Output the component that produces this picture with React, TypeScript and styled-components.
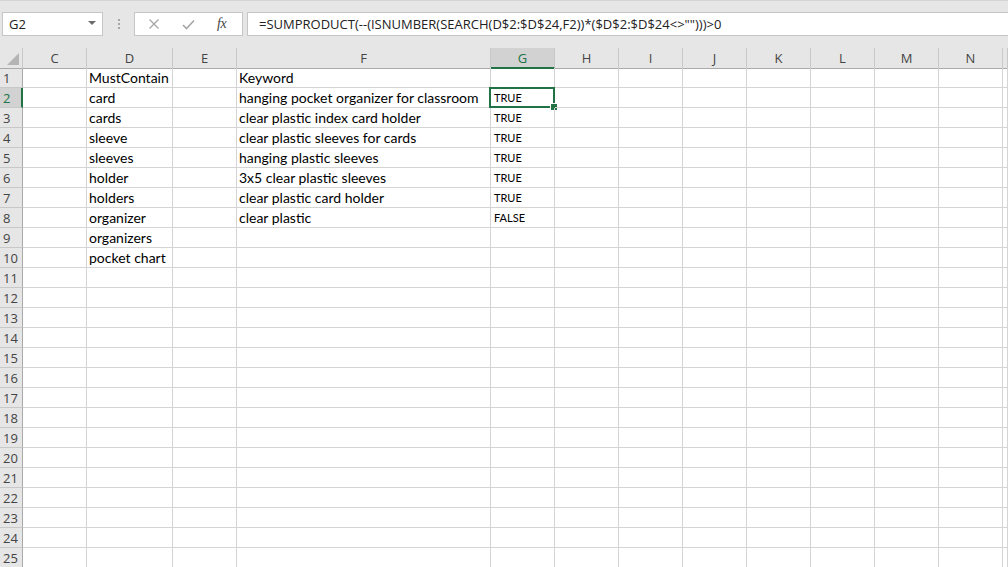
import React from "react";
import styled, { createGlobalStyle } from "styled-components";

const GlobalStyle = createGlobalStyle`
  html, body {
    margin: 0;
    padding: 0;
    background: #ffffff;
    overflow: hidden;
  }
`;

const columns = [
  { name: "C", width: 64 },
  { name: "D", width: 86 },
  { name: "E", width: 64 },
  { name: "F", width: 254 },
  { name: "G", width: 64 },
  { name: "H", width: 64 },
  { name: "I", width: 64 },
  { name: "J", width: 64 },
  { name: "K", width: 64 },
  { name: "L", width: 64 },
  { name: "M", width: 64 },
  { name: "N", width: 64 },
];

const mustContain = [
  "MustContain",
  "card",
  "cards",
  "sleeve",
  "sleeves",
  "holder",
  "holders",
  "organizer",
  "organizers",
  "pocket chart",
];

const keywords = [
  "Keyword",
  "hanging pocket organizer for classroom",
  "clear plastic index card holder",
  "clear plastic sleeves for cards",
  "hanging plastic sleeves",
  "3x5 clear plastic sleeves",
  "clear plastic card holder",
  "clear plastic",
];

const results = ["", "TRUE", "TRUE", "TRUE", "TRUE", "TRUE", "TRUE", "FALSE"];

// last track is the partly visible next column
const template = `23px ${columns.map((c) => c.width + "px").join(" ")} 1fr`;

const Page = styled.div`
  width: 1008px;
  height: 567px;
  overflow: hidden;
  background: #ffffff;
  font-family: "Open Sans", "Liberation Sans", sans-serif;
`;

const FormulaArea = styled.div`
  height: 48px;
  box-sizing: border-box;
  background: #e6e6e6;
  border-top: 1px solid #d4d4d4;
  display: flex;
  align-items: flex-start;
  padding: 11px 0 0 2px;
`;

const NameBox = styled.div`
  width: 101px;
  height: 24px;
  box-sizing: border-box;
  background: #ffffff;
  border: 1px solid #c6c6c6;
  display: flex;
  align-items: center;
  justify-content: space-between;
  padding: 0 6px 0 6px;
  font-size: 13px;
  color: #222;
`;

const Arrow = styled.span`
  width: 0;
  height: 0;
  border-left: 4px solid transparent;
  border-right: 4px solid transparent;
  border-top: 4px solid #6d6d6d;
  margin-top: -3px;
`;

const Grip = styled.div`
  width: 31px;
  height: 24px;
  display: flex;
  flex-direction: column;
  align-items: center;
  justify-content: center;
  gap: 2px;
  span {
    width: 2px;
    height: 2px;
    background: #a6a6a6;
  }
`;

const ButtonBox = styled.div`
  width: 109px;
  height: 24px;
  box-sizing: border-box;
  background: #ffffff;
  border: 1px solid #c6c6c6;
  display: flex;
  align-items: center;
  padding-left: 13px;
`;

const IconCell = styled.div<{ $w: number }>`
  width: ${(p) => p.$w}px;
  display: flex;
  align-items: center;
  justify-content: flex-start;
`;

const Fx = styled.span`
  font-family: "Liberation Serif", serif;
  font-style: italic;
  font-size: 14px;
  color: #444;
  letter-spacing: -0.5px;
`;

const FormulaInput = styled.div`
  flex: 1;
  margin-left: 4px;
  height: 24px;
  box-sizing: border-box;
  background: #ffffff;
  border: 1px solid #c6c6c6;
  border-right: none;
  display: flex;
  align-items: center;
  padding-left: 11px;
  font-size: 13px;
  color: #222;
  white-space: nowrap;
`;

const Grid = styled.div`
  display: flex;
  flex-direction: column;
`;

const Row = styled.div`
  display: grid;
  grid-template-columns: ${template};
  height: 20px;
`;

const Corner = styled.div`
  position: relative;
  background: #e6e6e6;
  border-right: 1px solid #c8c8c8;
  border-bottom: 1px solid #aaaaaa;
  box-sizing: border-box;
  &::after {
    content: "";
    position: absolute;
    right: 3px;
    bottom: 3px;
    width: 0;
    height: 0;
    border-left: 12px solid transparent;
    border-bottom: 12px solid #b4b4b4;
  }
`;

const ColHeader = styled.div<{ $active?: boolean }>`
  box-sizing: border-box;
  background: ${(p) => (p.$active ? "#d2d2d2" : "#e6e6e6")};
  border-right: 1px solid #c8c8c8;
  border-bottom: ${(p) => (p.$active ? "2px solid #217346" : "1px solid #aaaaaa")};
  color: ${(p) => (p.$active ? "#217346" : "#444444")};
  font-size: 13px;
  display: flex;
  align-items: center;
  justify-content: center;
  padding-top: ${(p) => (p.$active ? "1px" : "0")};
`;

const RowHeader = styled.div<{ $active?: boolean }>`
  box-sizing: border-box;
  background: ${(p) => (p.$active ? "#d2d2d2" : "#e6e6e6")};
  border-right: ${(p) => (p.$active ? "2px solid #217346" : "1px solid #aaaaaa")};
  border-bottom: 1px solid #c8c8c8;
  color: ${(p) => (p.$active ? "#217346" : "#444444")};
  font-size: 13px;
  display: flex;
  align-items: center;
  padding-left: 3px;
`;

const Cell = styled.div<{ $small?: boolean; $selected?: boolean }>`
  position: relative;
  box-sizing: border-box;
  border-right: 1px solid #d4d4d4;
  border-bottom: 1px solid #d4d4d4;
  font-family: "Lato", "Liberation Sans", sans-serif;
  font-size: ${(p) => (p.$small ? "11px" : "14px")};
  color: #000;
  display: flex;
  align-items: ${(p) => (p.$small ? "center" : "flex-end")};
  padding: ${(p) => (p.$small ? "0 0 1px 3px" : "0 0 1px 2px")};
  white-space: nowrap;
  overflow: visible;
  ${(p) =>
    p.$selected &&
    `
    &::before {
      content: "";
      position: absolute;
      left: -2px;
      top: -1px;
      right: -1px;
      bottom: -1px;
      border: 2px solid #217346;
      pointer-events: none;
    }
    &::after {
      content: "";
      position: absolute;
      right: -4px;
      bottom: -4px;
      width: 6px;
      height: 6px;
      background: #217346;
      border: 1px solid #ffffff;
    }
  `}
`;

const CrossIcon = () => (
  <svg width="12" height="12" viewBox="0 0 12 12">
    <path d="M1.5 1.5 L10.5 10.5 M10.5 1.5 L1.5 10.5" stroke="#a6a6a6" strokeWidth="1.3" fill="none" />
  </svg>
);

const CheckIcon = () => (
  <svg width="13" height="11" viewBox="0 0 13 11">
    <path d="M1 6 L4.5 9.5 L12 1.5" stroke="#a6a6a6" strokeWidth="1.6" fill="none" />
  </svg>
);

export default function App() {
  const rows = Array.from({ length: 25 }, (_, i) => i + 1);
  return (
    <Page>
      <GlobalStyle />
      <FormulaArea>
        <NameBox>
          G2
          <Arrow />
        </NameBox>
        <Grip>
          <span />
          <span />
          <span />
        </Grip>
        <ButtonBox>
          <IconCell $w={34}>
            <CrossIcon />
          </IconCell>
          <IconCell $w={35}>
            <CheckIcon />
          </IconCell>
          <IconCell $w={20}>
            <Fx>fx</Fx>
          </IconCell>
        </ButtonBox>
        <FormulaInput>=SUMPRODUCT(--(ISNUMBER(SEARCH(D$2:$D$24,F2))*($D$2:$D$24&lt;&gt;"")))&gt;0</FormulaInput>
      </FormulaArea>
      <Grid>
        <Row>
          <Corner />
          {columns.map((c) => (
            <ColHeader key={c.name} $active={c.name === "G"}>
              {c.name}
            </ColHeader>
          ))}
          <ColHeader />
        </Row>
        {rows.map((r) => (
          <Row key={r}>
            <RowHeader $active={r === 2}>{r}</RowHeader>
            {columns.map((c) => {
              let text = "";
              if (c.name === "D") text = mustContain[r - 1] ?? "";
              if (c.name === "F") text = keywords[r - 1] ?? "";
              if (c.name === "G") text = results[r - 1] ?? "";
              return (
                <Cell key={c.name} $small={c.name === "G"} $selected={c.name === "G" && r === 2}>
                  {text}
                </Cell>
              );
            })}
            <Cell />
          </Row>
        ))}
      </Grid>
    </Page>
  );
}
